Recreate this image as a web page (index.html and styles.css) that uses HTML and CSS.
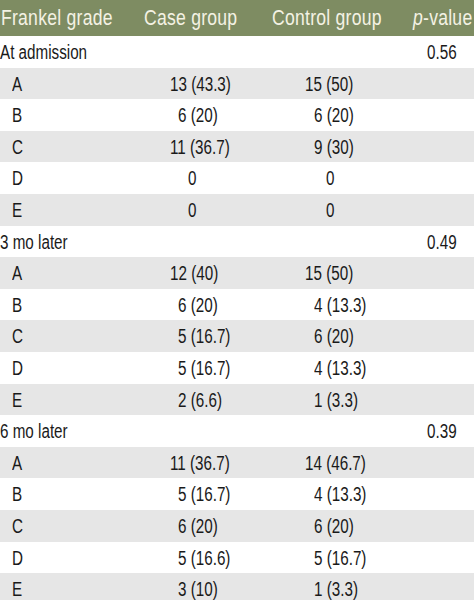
FILE: index.html
```html
<!DOCTYPE html>
<html lang="en">
<head>
<meta charset="utf-8">
<title>Frankel grade table</title>
<link rel="stylesheet" href="styles.css">
</head>
<body>
<div class="table">
  <div class="row head">
    <div class="cell c1"><span class="t">Frankel grade</span></div>
    <div class="cell c2"><span class="t">Case group</span></div>
    <div class="cell c3"><span class="t">Control group</span></div>
    <div class="cell c4"><span class="t"><i>p</i>-value</span></div>
  </div>

  <div class="row sec">
    <div class="cell c1 label"><span class="t">At admission</span></div><div class="cell c2"></div><div class="cell c3"></div><div class="cell c4 pv"><span class="t">0.56</span></div>
  </div>
  <div class="row alt"><div class="cell c1 g"><span class="t">A</span></div><div class="cell c2 d2"><span class="t">13 (43.3)</span></div><div class="cell c3 e2"><span class="t">15 (50)</span></div><div class="cell c4"></div></div>
  <div class="row"><div class="cell c1 g"><span class="t">B</span></div><div class="cell c2 d1"><span class="t">6 (20)</span></div><div class="cell c3 e1"><span class="t">6 (20)</span></div><div class="cell c4"></div></div>
  <div class="row alt"><div class="cell c1 g"><span class="t">C</span></div><div class="cell c2 d2"><span class="t">11 (36.7)</span></div><div class="cell c3 e1"><span class="t">9 (30)</span></div><div class="cell c4"></div></div>
  <div class="row"><div class="cell c1 g"><span class="t">D</span></div><div class="cell c2 d0"><span class="t">0</span></div><div class="cell c3 e0"><span class="t">0</span></div><div class="cell c4"></div></div>
  <div class="row alt"><div class="cell c1 g"><span class="t">E</span></div><div class="cell c2 d0"><span class="t">0</span></div><div class="cell c3 e0"><span class="t">0</span></div><div class="cell c4"></div></div>

  <div class="row sec">
    <div class="cell c1 label"><span class="t">3 mo later</span></div><div class="cell c2"></div><div class="cell c3"></div><div class="cell c4 pv"><span class="t">0.49</span></div>
  </div>
  <div class="row alt"><div class="cell c1 g"><span class="t">A</span></div><div class="cell c2 d2"><span class="t">12 (40)</span></div><div class="cell c3 e2"><span class="t">15 (50)</span></div><div class="cell c4"></div></div>
  <div class="row"><div class="cell c1 g"><span class="t">B</span></div><div class="cell c2 d1"><span class="t">6 (20)</span></div><div class="cell c3 e1"><span class="t">4 (13.3)</span></div><div class="cell c4"></div></div>
  <div class="row alt"><div class="cell c1 g"><span class="t">C</span></div><div class="cell c2 d1"><span class="t">5 (16.7)</span></div><div class="cell c3 e1"><span class="t">6 (20)</span></div><div class="cell c4"></div></div>
  <div class="row"><div class="cell c1 g"><span class="t">D</span></div><div class="cell c2 d1"><span class="t">5 (16.7)</span></div><div class="cell c3 e1"><span class="t">4 (13.3)</span></div><div class="cell c4"></div></div>
  <div class="row alt"><div class="cell c1 g"><span class="t">E</span></div><div class="cell c2 d1"><span class="t">2 (6.6)</span></div><div class="cell c3 e1"><span class="t">1 (3.3)</span></div><div class="cell c4"></div></div>

  <div class="row sec">
    <div class="cell c1 label"><span class="t">6 mo later</span></div><div class="cell c2"></div><div class="cell c3"></div><div class="cell c4 pv"><span class="t">0.39</span></div>
  </div>
  <div class="row alt"><div class="cell c1 g"><span class="t">A</span></div><div class="cell c2 d2"><span class="t">11 (36.7)</span></div><div class="cell c3 e2"><span class="t">14 (46.7)</span></div><div class="cell c4"></div></div>
  <div class="row"><div class="cell c1 g"><span class="t">B</span></div><div class="cell c2 d1"><span class="t">5 (16.7)</span></div><div class="cell c3 e1"><span class="t">4 (13.3)</span></div><div class="cell c4"></div></div>
  <div class="row alt"><div class="cell c1 g"><span class="t">C</span></div><div class="cell c2 d1"><span class="t">6 (20)</span></div><div class="cell c3 e1"><span class="t">6 (20)</span></div><div class="cell c4"></div></div>
  <div class="row"><div class="cell c1 g"><span class="t">D</span></div><div class="cell c2 d1"><span class="t">5 (16.6)</span></div><div class="cell c3 e1"><span class="t">5 (16.7)</span></div><div class="cell c4"></div></div>
  <div class="row alt"><div class="cell c1 g"><span class="t">E</span></div><div class="cell c2 d1"><span class="t">3 (10)</span></div><div class="cell c3 e1"><span class="t">1 (3.3)</span></div><div class="cell c4"></div></div>
</div>
</body>
</html>
```

FILE: styles.css
```css
html, body {
  margin: 0;
  padding: 0;
  background: #ffffff;
  overflow: hidden;
}

.table {
  width: 474px;
  font-family: "Liberation Sans", Arial, sans-serif;
  color: #1a1a1a;
  font-size: 19.5px;
}

.row {
  display: grid;
  grid-template-columns: 144px 128px 135px 67px;
  height: 31.6px;
  align-items: center;
  background: #ffffff;
}

.row.alt {
  background: #e6e6e6;
}

.row.head {
  height: 36px;
  background: #7e8c62;
  color: #f4f2e4;
  font-size: 22px;
  letter-spacing: 0.3px;
}

.cell {
  white-space: nowrap;
  line-height: 1;
  padding-top: 2px;
}

.head .cell { padding-top: 0; }

/* condensed face: Arial metrics narrowed to Arial Narrow proportions */
.t {
  display: inline-block;
  transform: scaleX(0.78);
  transform-origin: left center;
}

.head .t { transform: scaleX(0.8); }

.head .c1 { padding-left: 1px; }
.head .c4 { padding-left: 6px; }

.label { padding-left: 0; }
.g { padding-left: 12px; }

.d2 { padding-left: 26px; }
.d1 { padding-left: 34px; }
.d0 { padding-left: 44px; }

.e2 { padding-left: 33px; }
.e1 { padding-left: 42px; }
.e0 { padding-left: 54px; }

.pv { padding-left: 20px; }
```
